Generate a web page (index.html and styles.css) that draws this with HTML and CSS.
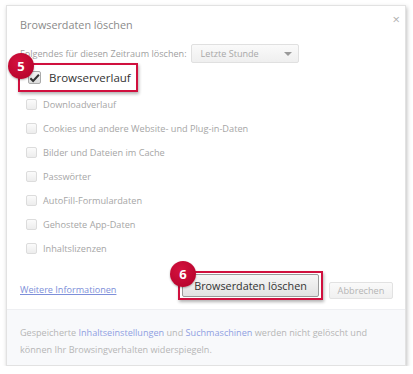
FILE: index.html
```html
<!DOCTYPE html>
<html lang="de">
<head>
    <meta charset="UTF-8">
    <meta name="viewport" content="width=device-width, initial-scale=1.0">
    <title>Browserdaten löschen</title>
    <link rel="stylesheet" href="styles.css">
</head>
<body>
<div class="dialog">
    <div class="dialog-header">
        <h1 class="dialog-title">Browserdaten löschen</h1>
        <span class="close">&#215;</span>
    </div>

    <div class="period-row">
        <span class="period-label">Folgendes für diesen Zeitraum löschen:</span>
        <div class="select">
            <span>Letzte Stunde</span>
            <span class="select-arrow"></span>
        </div>
    </div>

    <div class="items">
        <div class="item item-marked">
            <span class="badge badge-5">5</span>
            <span class="box checked">
                <svg width="12" height="10" viewBox="0 0 12 10"><path d="M1.5 5.2 L4.5 8.2 L10.8 1.5" fill="none" stroke="#333" stroke-width="2.2"/></svg>
            </span>
            <span class="item-text">Browserverlauf</span>
        </div>
        <div class="item"><span class="box"></span><span>Downloadverlauf</span></div>
        <div class="item"><span class="box"></span><span>Cookies und andere Website- und Plug-in-Daten</span></div>
        <div class="item"><span class="box"></span><span>Bilder und Dateien im Cache</span></div>
        <div class="item"><span class="box"></span><span>Passwörter</span></div>
        <div class="item"><span class="box"></span><span>AutoFill-Formulardaten</span></div>
        <div class="item"><span class="box"></span><span>Gehostete App-Daten</span></div>
        <div class="item"><span class="box"></span><span>Inhaltslizenzen</span></div>
    </div>

    <div class="actions">
        <a class="more" href="#">Weitere Informationen</a>
        <div class="buttons">
            <div class="btn-marked">
                <span class="badge badge-6">6</span>
                <button type="button" class="btn btn-main">Browserdaten löschen</button>
            </div>
            <button type="button" class="btn btn-cancel">Abbrechen</button>
        </div>
    </div>

    <div class="dialog-footer">
        <p class="footer-line">Gespeicherte <a href="#">Inhaltseinstellungen</a> und <a href="#">Suchmaschinen</a> werden nicht gelöscht und</p>
        <p class="footer-line">können Ihr Browsingverhalten widerspiegeln.</p>
    </div>
</div>
</body>
</html>
```

FILE: styles.css
```css
body {
    margin: 0;
    background-color: #fff;
    font-family: "Open Sans", "Liberation Sans", sans-serif;
}
.dialog {
    position: relative;
    margin: 5px 0 0 6px;
    width: 400px;
    height: 361px;
    box-sizing: border-box;
    background-color: #fff;
    border: 1px solid #e2e2e2;
    box-shadow: 1px 2px 4px rgba(0, 0, 0, 0.25);
}
.dialog-header {
    display: flex;
    justify-content: space-between;
    align-items: flex-start;
    padding: 7px 5px 0 13px;
}
.dialog-title {
    margin: 0;
    font-size: 10.8px;
    font-weight: normal;
    line-height: 24px;
    color: #8a8a8a;
}
.close {
    font-size: 13px;
    line-height: 12px;
    color: #b0b0b0;
    margin-top: 0;
}
.period-row {
    display: flex;
    align-items: center;
    margin-top: 7px;
    padding-left: 13px;
    height: 19px;
}
.period-label {
    font-size: 9.1px;
    color: #a0a0a0;
    margin-right: 4px;
}
.select {
    display: flex;
    justify-content: space-between;
    align-items: center;
    width: 108px;
    height: 19px;
    box-sizing: border-box;
    padding: 0 6px 0 9px;
    border: 1px solid #e0e0e0;
    border-radius: 2px;
    background: linear-gradient(#fafafa, #efefef);
    font-size: 9.1px;
    color: #a8a8a8;
}
.select-arrow {
    width: 0;
    height: 0;
    border-left: 4px solid transparent;
    border-right: 4px solid transparent;
    border-top: 4px solid #9a9a9a;
}
.items {
    padding-left: 19px;
}
.item {
    display: flex;
    align-items: center;
    height: 24px;
    font-size: 9.2px;
    color: #a6a6a6;
}
.box {
    width: 11px;
    height: 11px;
    box-sizing: border-box;
    margin-right: 6px;
    border: 1px solid #dcdcdc;
    border-radius: 2px;
    background: linear-gradient(#fbfbfb, #ededed);
}
.item-marked {
    position: relative;
    margin-left: -8px;
    width: 120px;
    height: 29px;
    box-sizing: border-box;
    padding-left: 8px;
    border: 2px solid #d0103e;
    box-shadow: 1px 2px 3px rgba(0, 0, 0, 0.3);
    color: #333;
    font-size: 11.5px;
}
.item-marked .box {
    display: flex;
    align-items: center;
    justify-content: center;
    width: 13px;
    height: 13px;
    margin-right: 8px;
    border-color: #aaa;
    background: linear-gradient(#f4f4f4, #dcdcdc);
}
.badge {
    position: absolute;
    width: 26px;
    height: 26px;
    border-radius: 50%;
    background: radial-gradient(circle at 40% 35%, #d4123e, #b00028);
    color: #fff;
    font-size: 13px;
    font-weight: bold;
    line-height: 26px;
    text-align: center;
    box-shadow: 0 1px 2px rgba(0, 0, 0, 0.3);
}
.badge-5 {
    left: -12px;
    top: -12px;
}
.badge-6 {
    left: -10px;
    top: -12px;
}
.actions {
    display: flex;
    justify-content: space-between;
    align-items: flex-end;
    margin-top: 11px;
    padding: 0 12px 0 13px;
    height: 29px;
}
.more {
    font-size: 9.1px;
    color: #7d8fd9;
    margin-bottom: 4px;
}
.buttons {
    display: flex;
    align-items: flex-end;
}
.btn-marked {
    position: relative;
    padding: 1px 2px;
    border: 2px solid #d0103e;
    box-shadow: 1px 2px 3px rgba(0, 0, 0, 0.3);
    margin-right: 6px;
}
.btn {
    font-family: inherit;
    border-radius: 2px;
    cursor: pointer;
}
.btn-main {
    display: block;
    width: 137px;
    height: 23px;
    padding: 0;
    border: 1px solid #9a9a9a;
    background: linear-gradient(#f6f6f6, #e2e2e2);
    color: #333;
    font-size: 10.8px;
}
.btn-cancel {
    width: 64px;
    height: 17px;
    padding: 0;
    margin-bottom: 1px;
    border: 1px solid #e2e2e2;
    background: linear-gradient(#fafafa, #f0f0f0);
    color: #b4b4b4;
    font-size: 9.2px;
}
.dialog-footer {
    margin-top: 9px;
    height: 56px;
    box-sizing: border-box;
    padding: 14px 13px 0;
    background-color: #f8f9fb;
    border-top: 1px solid #eeeff2;
    color: #b6b6b6;
}
.footer-line {
    margin: 0;
    font-size: 9.1px;
    line-height: 17px;
    white-space: nowrap;
}
.footer-line a {
    color: #8fa0e2;
    text-decoration: none;
}
```
